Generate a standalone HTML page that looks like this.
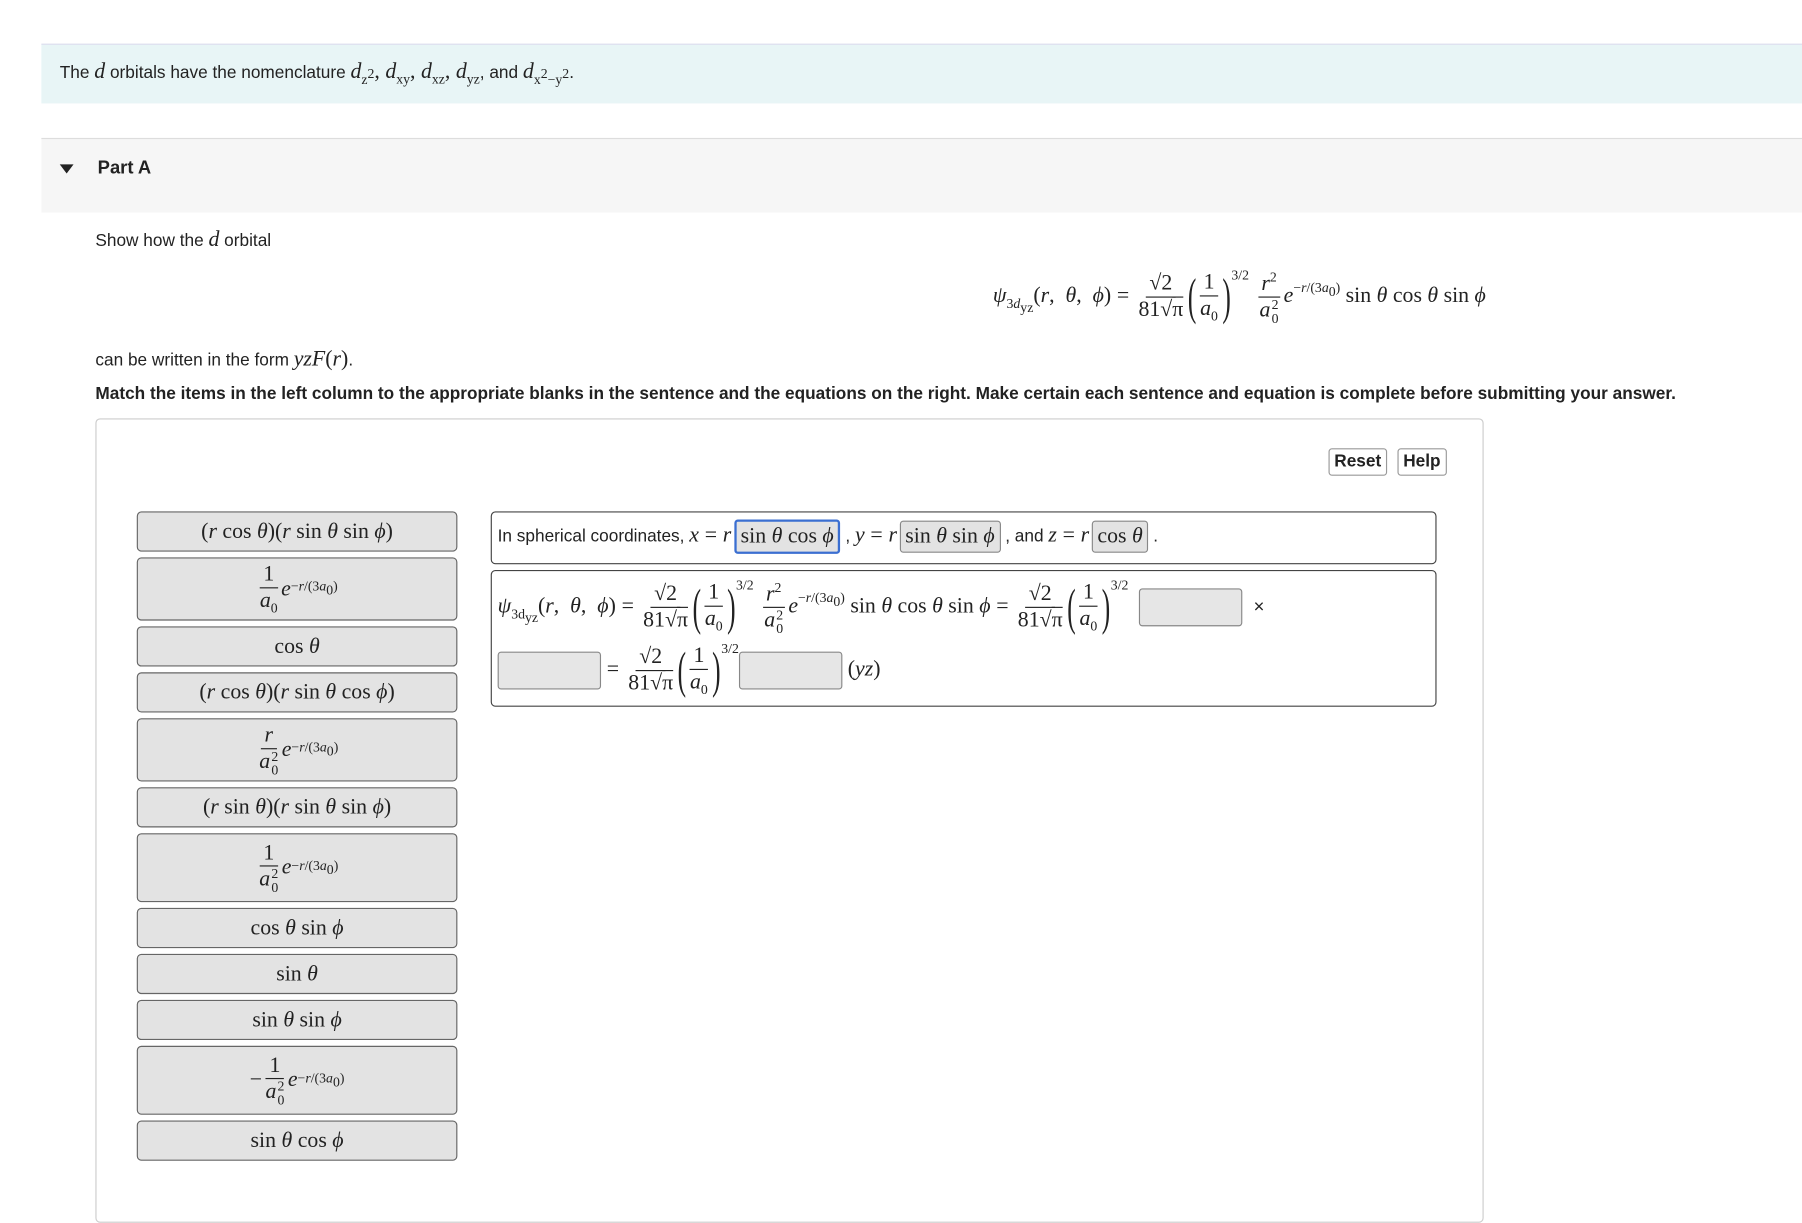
<!DOCTYPE html>
<html><head><meta charset="utf-8"><style>
*{box-sizing:border-box;margin:0;padding:0}
html,body{width:1802px;height:1208px;overflow:hidden;background:#fff}
#w{position:absolute;left:0;top:0;width:1568px;height:1051px;transform:scale(1.14923);transform-origin:0 0;font-family:"Liberation Sans",sans-serif;font-size:15px;color:#222}
.a{position:absolute;white-space:nowrap}
.m{font-family:"Liberation Serif",serif;font-size:19px}
.i{font-style:italic}
.fr{display:inline-flex;flex-direction:column;align-items:center;vertical-align:middle;line-height:1.15;margin:0 3px}
.fr>span:first-child{border-bottom:1px solid #222;padding:0 3px}
.par{font-size:44px;font-weight:100;vertical-align:middle;transform:scaleX(.5);display:inline-block;line-height:1;margin:0 -3px}
sup,sub{font-size:12px}
.ss{display:inline-flex;flex-direction:column;vertical-align:middle;font-size:12px;line-height:1;margin-left:1px}
.ss sup,.ss sub{font-size:12px;vertical-align:0}
.eq{margin:0 5px}
.item{position:absolute;left:119px;width:279px;border:1.5px solid #666;border-radius:4px;background:#e3e3e3;display:flex;align-items:center;justify-content:center;font-family:"Liberation Serif",serif;font-size:19px}
.box{position:absolute;left:427px;width:823px;border:1.5px solid #444;border-radius:4px;background:#fff}
.blank{display:inline-block;width:90px;height:33px;border:1.5px solid #888;border-radius:3px;background:#e6e6e6;vertical-align:middle}
.fill{display:inline-block;border:1.5px solid #888;border-radius:3px;background:#e3e3e3;padding:2px 4px;vertical-align:middle}
.btn{position:absolute;top:390px;height:24px;border:1px solid #999;border-radius:3px;font-weight:bold;font-size:15px;line-height:22px;padding:0 4px;background:#fff}
</style></head><body><div id="w">
<div class="a" style="left:36px;top:38px;width:1532px;height:52px;background:#e8f5f6;border-top:1px solid #dde"></div>
<div class="a" style="left:52px;top:52px">The <span class="m i">d</span> orbitals have the nomenclature <span class="m"><i>d</i><sub>z<sup>2</sup></sub>, <i>d</i><sub>xy</sub>, <i>d</i><sub>xz</sub>, <i>d</i><sub>yz</sub></span>, and <span class="m"><i>d</i><sub>x<sup>2</sup>−y<sup>2</sup></sub></span>.</div>
<div class="a" style="left:36px;top:120px;width:1532px;height:65px;background:#f6f6f6;border-top:1px solid #ddd"></div>
<div class="a" style="left:52px;top:143px;width:0;height:0;border-left:6px solid transparent;border-right:6px solid transparent;border-top:8px solid #222"></div>
<div class="a" style="left:85px;top:138px;font-weight:bold;font-size:16px">Part A</div>
<div class="a" style="left:83px;top:198px">Show how the <span class="m i">d</span> orbital</div>
<div class="a m" style="left:864px;top:232px"><i>ψ</i><sub>3<i>d</i><sub>yz</sub></sub>(<i>r</i>,&nbsp; <i>θ</i>,&nbsp; <i>ϕ</i>)<span class="eq">=</span><span class="fr"><span>√2</span><span>81√<span style="text-decoration:overline">π</span></span></span><span class="par">(</span><span class="fr"><span>1</span><span><i>a</i><sub>0</sub></span></span><span class="par">)</span><sup style="vertical-align:20px">3/2</sup> <span class="fr"><span><i>r</i><sup>2</sup></span><span><i>a</i><span class="ss"><sup>2</sup><sub>0</sub></span></span></span><i>e</i><sup style="vertical-align:9px">−<i>r</i>/(3<i>a</i><sub>0</sub>)</sup> sin <i>θ</i> cos <i>θ</i> sin <i>ϕ</i></div>
<div class="a" style="left:83px;top:302px">can be written in the form <span class="m i">yzF</span><span class="m">(<i>r</i>)</span>.</div>
<div class="a" style="left:83px;top:334px;font-weight:bold">Match the items in the left column to the appropriate blanks in the sentence and the equations on the right. Make certain each sentence and equation is complete before submitting your answer.</div>
<div class="a" style="left:83px;top:364px;width:1208px;height:700px;border:1px solid #ccc;border-radius:4px"></div>
<div class="btn" style="left:1156px">Reset</div><div class="btn" style="left:1216px">Help</div>

<div class="item" style="top:445px;height:35px">(<i>r</i>&nbsp;cos&nbsp;<i>θ</i>)(<i>r</i>&nbsp;sin&nbsp;<i>θ</i>&nbsp;sin&nbsp;<i>ϕ</i>)</div>
<div class="item" style="top:485px;height:55px"><span class="fr"><span>1</span><span><i>a</i><sub>0</sub></span></span><i>e</i><sup style="vertical-align:12px">−<i>r</i>/(3<i>a</i><sub>0</sub>)</sup></div>
<div class="item" style="top:545px;height:35px">cos&nbsp;<i>θ</i></div>
<div class="item" style="top:585px;height:35px">(<i>r</i>&nbsp;cos&nbsp;<i>θ</i>)(<i>r</i>&nbsp;sin&nbsp;<i>θ</i>&nbsp;cos&nbsp;<i>ϕ</i>)</div>
<div class="item" style="top:625px;height:55px"><span class="fr"><span><i>r</i></span><span><i>a</i><span class="ss"><sup>2</sup><sub>0</sub></span></span></span><i>e</i><sup style="vertical-align:12px">−<i>r</i>/(3<i>a</i><sub>0</sub>)</sup></div>
<div class="item" style="top:685px;height:35px">(<i>r</i>&nbsp;sin&nbsp;<i>θ</i>)(<i>r</i>&nbsp;sin&nbsp;<i>θ</i>&nbsp;sin&nbsp;<i>ϕ</i>)</div>
<div class="item" style="top:725px;height:60px"><span class="fr"><span>1</span><span><i>a</i><span class="ss"><sup>2</sup><sub>0</sub></span></span></span><i>e</i><sup style="vertical-align:12px">−<i>r</i>/(3<i>a</i><sub>0</sub>)</sup></div>
<div class="item" style="top:790px;height:35px">cos&nbsp;<i>θ</i>&nbsp;sin&nbsp;<i>ϕ</i></div>
<div class="item" style="top:830px;height:35px">sin&nbsp;<i>θ</i></div>
<div class="item" style="top:870px;height:35px">sin&nbsp;<i>θ</i>&nbsp;sin&nbsp;<i>ϕ</i></div>
<div class="item" style="top:910px;height:60px">−<span class="fr"><span>1</span><span><i>a</i><span class="ss"><sup>2</sup><sub>0</sub></span></span></span><i>e</i><sup style="vertical-align:12px">−<i>r</i>/(3<i>a</i><sub>0</sub>)</sup></div>
<div class="item" style="top:975px;height:35px">sin&nbsp;<i>θ</i>&nbsp;cos&nbsp;<i>ϕ</i></div>

<div class="box" style="top:445px;height:46px"></div>
<div class="a" style="left:433px;top:452px">In spherical coordinates, <span class="m"><i>x</i><span class="eq">=</span><i>r</i></span> <span class="fill m" style="border:2px solid #3b6fd1;margin-left:-2px">sin&nbsp;<i>θ</i>&nbsp;cos&nbsp;<i>ϕ</i></span> , <span class="m"><i>y</i><span class="eq">=</span><i>r</i></span> <span class="fill m" style="margin-left:-2px">sin&nbsp;<i>θ</i>&nbsp;sin&nbsp;<i>ϕ</i></span> , and <span class="m"><i>z</i><span class="eq">=</span><i>r</i></span> <span class="fill m" style="margin-left:-2px">cos&nbsp;<i>θ</i></span> .</div>
<div class="box" style="top:496px;height:119px"></div>
<div class="a m" style="left:433px;top:502px"><i>ψ</i><sub>3d<sub>yz</sub></sub>(<i>r</i>,&nbsp; <i>θ</i>,&nbsp; <i>ϕ</i>)<span class="eq">=</span><span class="fr"><span>√2</span><span>81√<span style="text-decoration:overline">π</span></span></span><span class="par">(</span><span class="fr"><span>1</span><span><i>a</i><sub>0</sub></span></span><span class="par">)</span><sup style="vertical-align:20px">3/2</sup> <span class="fr"><span><i>r</i><sup>2</sup></span><span><i>a</i><span class="ss"><sup>2</sup><sub>0</sub></span></span></span><i>e</i><sup style="vertical-align:9px">−<i>r</i>/(3<i>a</i><sub>0</sub>)</sup> sin <i>θ</i> cos <i>θ</i> sin <i>ϕ</i><span class="eq">=</span><span class="fr"><span>√2</span><span>81√<span style="text-decoration:overline">π</span></span></span><span class="par">(</span><span class="fr"><span>1</span><span><i>a</i><sub>0</sub></span></span><span class="par">)</span><sup style="vertical-align:20px">3/2</sup> &nbsp;<span class="blank"></span> &nbsp;<span style="font-family:'Liberation Sans';font-size:16px">×</span></div>
<div class="a m" style="left:433px;top:557px"><span class="blank"></span><span class="eq">=</span><span class="fr"><span>√2</span><span>81√<span style="text-decoration:overline">π</span></span></span><span class="par">(</span><span class="fr"><span>1</span><span><i>a</i><sub>0</sub></span></span><span class="par">)</span><sup style="vertical-align:20px">3/2</sup><span class="blank"></span> (<i>yz</i>)</div>
</div></body></html>
